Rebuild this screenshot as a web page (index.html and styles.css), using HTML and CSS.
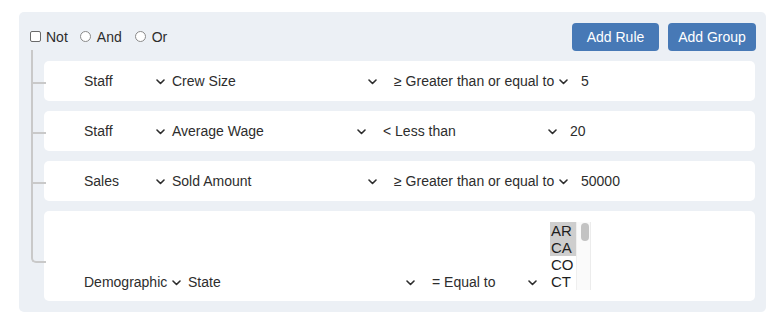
FILE: index.html
```html
<!DOCTYPE html>
<html lang="en">
<head>
<meta charset="utf-8">
<title>Query Builder</title>
<link rel="stylesheet" href="styles.css">
</head>
<body>
<div class="page">
  <div class="group">
    <div class="group-header">
      <div class="combinators">
        <label class="opt"><span class="checkbox"></span><span class="opt-text">Not</span></label>
        <label class="opt opt-radio"><span class="radio"></span><span class="opt-text">And</span></label>
        <label class="opt opt-radio"><span class="radio"></span><span class="opt-text">Or</span></label>
      </div>
      <div class="actions">
        <button class="btn btn-rule">Add Rule</button>
        <button class="btn btn-group">Add Group</button>
      </div>
    </div>
    <div class="group-body">
      <div class="rule">
        <div class="sel sel-group"><span>Staff</span><svg class="chev" viewBox="0 0 9 6"><path d="M1 1 L4.5 4.5 L8 1"/></svg></div>
        <div class="sel sel-field"><span>Crew Size</span><svg class="chev" viewBox="0 0 9 6"><path d="M1 1 L4.5 4.5 L8 1"/></svg></div>
        <div class="sel sel-op"><span>≥ Greater than or equal to</span><svg class="chev" viewBox="0 0 9 6"><path d="M1 1 L4.5 4.5 L8 1"/></svg></div>
        <div class="val">5</div>
      </div>
      <div class="rule">
        <div class="sel sel-group"><span>Staff</span><svg class="chev" viewBox="0 0 9 6"><path d="M1 1 L4.5 4.5 L8 1"/></svg></div>
        <div class="sel sel-field sel-field-sm"><span>Average Wage</span><svg class="chev" viewBox="0 0 9 6"><path d="M1 1 L4.5 4.5 L8 1"/></svg></div>
        <div class="sel sel-op"><span>&lt; Less than</span><svg class="chev" viewBox="0 0 9 6"><path d="M1 1 L4.5 4.5 L8 1"/></svg></div>
        <div class="val">20</div>
      </div>
      <div class="rule">
        <div class="sel sel-group"><span>Sales</span><svg class="chev" viewBox="0 0 9 6"><path d="M1 1 L4.5 4.5 L8 1"/></svg></div>
        <div class="sel sel-field"><span>Sold Amount</span><svg class="chev" viewBox="0 0 9 6"><path d="M1 1 L4.5 4.5 L8 1"/></svg></div>
        <div class="sel sel-op"><span>≥ Greater than or equal to</span><svg class="chev" viewBox="0 0 9 6"><path d="M1 1 L4.5 4.5 L8 1"/></svg></div>
        <div class="val">50000</div>
      </div>
      <div class="rule rule-tall">
        <div class="sel sel-group sel-group-wide"><span>Demographic</span><svg class="chev" viewBox="0 0 9 6"><path d="M1 1 L4.5 4.5 L8 1"/></svg></div>
        <div class="sel sel-field sel-field-wide"><span>State</span><svg class="chev" viewBox="0 0 9 6"><path d="M1 1 L4.5 4.5 L8 1"/></svg></div>
        <div class="sel sel-op sel-op-sm"><span>= Equal to</span><svg class="chev" viewBox="0 0 9 6"><path d="M1 1 L4.5 4.5 L8 1"/></svg></div>
        <div class="listbox">
          <div class="options">
            <div class="option selected">AR</div>
            <div class="option selected">CA</div>
            <div class="option">CO</div>
            <div class="option">CT</div>
          </div>
          <div class="scrollbar"><div class="thumb"></div></div>
        </div>
      </div>
    </div>
  </div>
</div>
</body>
</html>
```
FILE: styles.css
```css
* { box-sizing: border-box; }

body {
  margin: 0;
  background: #ffffff;
  font-family: "Liberation Sans", Arial, Helvetica, sans-serif;
  font-size: 14px;
  color: #333333;
}

.page {
  padding: 12px 15px 16px 19px;
}

.group {
  background: #ecf0f5;
  border-radius: 5px;
  padding: 11px 10px 11px 10px;
}

.group-header {
  display: flex;
  justify-content: space-between;
  align-items: center;
  height: 28px;
}

.combinators {
  display: flex;
  align-items: center;
}

.opt {
  display: flex;
  align-items: center;
  color: #2d2d2d;
}

.opt-radio { margin-left: 12px; }
.opt-radio + .opt-radio { margin-left: 13px; }

.checkbox {
  width: 11px;
  height: 11px;
  margin-left: 1px;
  margin-top: -2px;
  border: 1px solid #6a6a6a;
  border-radius: 2px;
  background: #fff;
}

.radio {
  width: 11px;
  height: 11px;
  margin-top: -2px;
  border: 1px solid #8a8a8a;
  border-radius: 50%;
  background: #fff;
}

.opt-text { margin-left: 6px; }
.checkbox + .opt-text { margin-left: 5px; }

.actions {
  display: flex;
  gap: 9px;
}

.btn {
  height: 28px;
  border: none;
  border-radius: 4px;
  background: #4779b6;
  color: #ffffff;
  font-family: "Liberation Sans", Arial, Helvetica, sans-serif;
  font-size: 14px;
  padding: 0;
  text-align: center;
}

.btn-rule { width: 87px; }
.btn-group { width: 88px; }

.group-body {
  display: flex;
  flex-direction: column;
  gap: 10px;
  margin-top: 10px;
  padding-left: 15px;
  padding-right: 1px;
}

.rule {
  position: relative;
  display: flex;
  align-items: center;
  background: #ffffff;
  border-radius: 5px;
  height: 40px;
  padding: 10px 10px 10px 40px;
}

.rule::before {
  content: "";
  position: absolute;
  left: -13px;
  top: -11px;
  width: 13px;
  height: calc(50% + 12px);
  border-left: 2px solid #c9c9c9;
  border-bottom: 2px solid #c9c9c9;
}

.rule::after {
  content: "";
  position: absolute;
  left: -13px;
  top: calc(50% + 1px);
  bottom: 0;
  border-left: 2px solid #c9c9c9;
}

.rule-tall {
  height: 90px;
  align-items: flex-end;
  padding-top: 11px;
  padding-bottom: 9px;
}

.rule-tall::before {
  height: 61px;
  border-bottom-left-radius: 5px;
}

.rule-tall::after { display: none; }

.sel {
  display: flex;
  justify-content: space-between;
  align-items: center;
  height: 20px;
  white-space: nowrap;
  color: #2d2d2d;
}

.chev {
  width: 9px;
  height: 6px;
  flex: none;
  margin-top: 1px;
}

.chev path {
  fill: none;
  stroke: #2d2d2d;
  stroke-width: 1.6;
  stroke-linecap: round;
  stroke-linejoin: round;
}

.sel-group { width: 81px; }
.sel-group-wide { width: 97px; }

.sel-field { width: 205px; margin-left: 7px; }
.sel-field-sm { width: 194px; }
.sel-field-wide { width: 227px; }

.sel-op { width: 174px; margin-left: 17px; }
.sel-op-sm { width: 105px; }

.val {
  margin-left: 13px;
  height: 20px;
  line-height: 20px;
  color: #2d2d2d;
}

.listbox {
  display: flex;
  margin-left: 13px;
  margin-bottom: 2px;
  height: 68px;
  width: 41px;
  background: #fff;
}

.options {
  width: 26px;
  font-size: 15px;
  color: #1e1e1e;
}

.option {
  height: 17px;
  line-height: 17px;
  padding-left: 1px;
}

.option.selected { background: #cecece; }

.scrollbar {
  width: 15px;
  padding: 1px 3px 0 4px;
  background: #fafafa;
  border-left: 1px solid #efefef;
  border-right: 1px solid #ececec;
}

.thumb {
  width: 8px;
  height: 18px;
  border-radius: 4px;
  background: #c3c3c3;
}
```
